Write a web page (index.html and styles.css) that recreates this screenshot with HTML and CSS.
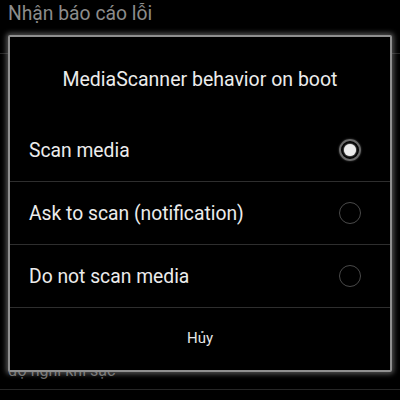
FILE: index.html
```html
<!DOCTYPE html>
<html>
<head>
  <title>MediaScanner</title>
  <link rel="stylesheet" href="styles.css">
</head>
<body>
  <div id="settings">
    <div class="setting first"><span class="setting-title">Nhận báo cáo lỗi</span></div>
    <div class="setting last"><span class="setting-summary">độ nghỉ khi sạc</span></div>
  </div>

  <div id="dialog">
    <div class="dialog-title">MediaScanner behavior on boot</div>
    <ul class="choices">
      <li class="choice">Scan media <span class="radio checked"></span></li>
      <li class="choice">Ask to scan (notification) <span class="radio"></span></li>
      <li class="choice">Do not scan media <span class="radio"></span></li>
    </ul>
    <div class="dialog-buttons">
      <button type="button">Hủy</button>
    </div>
  </div>
</body>
</html>
```

FILE: styles.css
```css
/* Android settings screen with a single choice dialog on top */
body {
  margin: 0;
  padding: 0;
  background-color: #000;
  font-family: Roboto, "Noto Sans", sans-serif;
  width: 400px;
  height: 400px;
  overflow: hidden;
  position: relative;
}

#settings .setting {
  border-bottom: 1px solid #262626;
  padding-left: 8px;
  box-sizing: border-box;
}

#settings .first {
  height: 54px;
}

#settings .setting-title {
  display: block;
  font-size: 19.3px;
  line-height: 28px;
  color: #8c8c8c;
}

#settings .last {
  height: 336px;
  display: flex;
  align-items: flex-end;
  padding-bottom: 8px;
}

#settings .setting-summary {
  font-size: 16px;
  line-height: 20px;
  color: #707070;
}

#dialog {
  position: absolute;
  top: 35px;
  left: 8px;
  width: 384px;
  height: 337px;
  box-sizing: border-box;
  background-color: #000;
  border: 2px solid #8f8f8f;
  border-radius: 2px;
  box-shadow: 0 0 5px 2px rgba(160, 160, 160, 0.5);
  display: flex;
  flex-direction: column;
}

.dialog-title {
  height: 82px;
  display: flex;
  align-items: center;
  justify-content: center;
  font-size: 19.5px;
  color: #ececec;
  padding-top: 2px;
  box-sizing: border-box;
}

.choices {
  list-style-type: none;
  margin: 0;
  padding: 0;
}

.choice {
  height: 63px;
  display: flex;
  align-items: center;
  justify-content: space-between;
  padding: 0 29px 0 19px;
  font-size: 19.3px;
  color: #ececec;
  border-bottom: 1px solid #2e2e2e;
  box-sizing: border-box;
}

.radio {
  width: 22px;
  height: 22px;
  border: 1.5px solid #4a4a4a;
  border-radius: 50%;
  box-sizing: border-box;
  position: relative;
}

.radio.checked {
  border: 2px solid #6a6a6a;
  box-shadow: 0 0 2px rgba(200, 200, 200, 0.4);
}

.radio.checked::after {
  content: "";
  position: absolute;
  top: 3px;
  left: 3px;
  width: 12px;
  height: 12px;
  border-radius: 50%;
  background-color: #ededed;
  box-shadow: 0 0 2px #fff;
}

.dialog-buttons {
  flex: 1;
  display: flex;
}

.dialog-buttons button {
  flex: 1;
  background: none;
  border: none;
  color: #e6e6e6;
  font-family: Roboto, "Noto Sans", sans-serif;
  font-size: 15px;
  padding: 0 0 2px 0;
}
```
